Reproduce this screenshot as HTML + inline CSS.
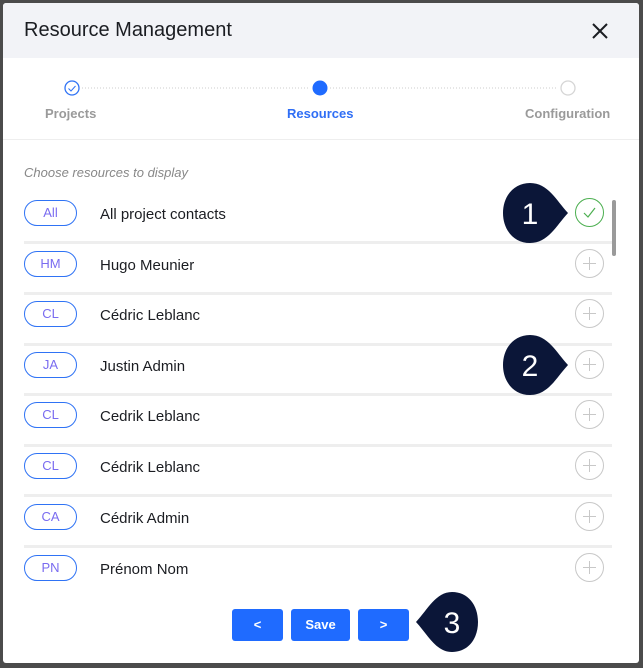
<!DOCTYPE html>
<html><head><style>
*{margin:0;padding:0;box-sizing:border-box}
body{width:643px;height:668px;background:#4b4b4b;position:relative;overflow:hidden;font-family:"Liberation Sans",sans-serif}
.modal{position:absolute;left:3px;top:3px;width:636px;height:660px;background:#fff;border-radius:3px;overflow:hidden}
.hdr{position:absolute;left:0;top:0;width:100%;height:55px;background:#f2f3f7}
.title{position:absolute;left:21px;top:16px;font-size:20px;color:#1b1d22}
.lbl{position:absolute;top:103px;font-size:13px;font-weight:bold;color:#9a9a9a}
.pill{position:absolute;left:21px;width:53px;height:26px;border:1.5px solid #2f73f5;border-radius:13px;color:#7a6cf0;font-size:13px;text-align:center;line-height:23px}
.name{position:absolute;left:97px;font-size:15px;color:#1b1d22;margin-top:2px}
.sep{position:absolute;left:21px;width:588px;height:3px;background:#eeeeee}
.plus{position:absolute;left:572px;width:29px;height:29px;border:1px solid #c8c8c8;border-radius:50%}
.btn{position:absolute;top:606px;height:32px;background:#1f6bff;border-radius:3px;color:#fff;font-size:13px;font-weight:bold;text-align:center;line-height:32px}
</style></head><body>
<div class="modal">
<div class="hdr"></div>
<div class="title">Resource Management</div>
<svg style="position:absolute;left:588px;top:19px" width="18" height="18"><path d="M2 2L16 16M16 2L2 16" stroke="#1b1d22" stroke-width="2"/></svg>
<svg style="position:absolute;left:0;top:70px" width="636" height="30">
<line x1="79" y1="15" x2="307" y2="15" stroke="#ccc" stroke-dasharray="1 2"/>
<line x1="327" y1="15" x2="555" y2="15" stroke="#ccc" stroke-dasharray="1 2"/>
<circle cx="69" cy="15" r="7" fill="none" stroke="#2f73f5" stroke-width="1.3"/>
<path d="M65.5 15.5l2.5 2.5 4.5-5" fill="none" stroke="#2f73f5" stroke-width="1"/>
<circle cx="317" cy="15" r="7.5" fill="#1f6bff"/>
<circle cx="565" cy="15" r="7" fill="none" stroke="#d5d5d5" stroke-width="1.3"/>
</svg>
<div class="lbl" style="left:42px">Projects</div>
<div class="lbl" style="left:284px;color:#2f6ef5">Resources</div>
<div class="lbl" style="left:522px">Configuration</div>
<div style="position:absolute;left:0;top:136px;width:100%;height:1px;background:#eee"></div>
<div style="position:absolute;left:21px;top:162px;font-size:13px;font-style:italic;color:#888">Choose resources to display</div>
<div style="position:absolute;left:609px;top:197px;width:4px;height:56px;background:#9a9a9a;border-radius:2px"></div>

<div class="pill" style="top:197px">All</div><div class="name" style="top:201px">All project contacts</div>
<div style="position:absolute;left:572px;top:195px;width:29px;height:29px;border:1px solid #4caf50;border-radius:50%"></div>
<svg style="position:absolute;left:572px;top:195px" width="29" height="29"><path d="M9 15l4 4 7-9" fill="none" stroke="#4caf50" stroke-width="1.2"/></svg>
<div class="sep" style="top:238px"></div>

<div class="pill" style="top:248px">HM</div><div class="name" style="top:252px">Hugo Meunier</div><div class="plus" style="top:246px"></div><div class="sep" style="top:289px"></div>
<div class="pill" style="top:298px">CL</div><div class="name" style="top:302px">Cédric Leblanc</div><div class="plus" style="top:296px"></div><div class="sep" style="top:340px"></div>
<div class="pill" style="top:349px">JA</div><div class="name" style="top:353px">Justin Admin</div><div class="plus" style="top:347px"></div><div class="sep" style="top:390px"></div>
<div class="pill" style="top:399px">CL</div><div class="name" style="top:403px">Cedrik Leblanc</div><div class="plus" style="top:397px"></div><div class="sep" style="top:441px"></div>
<div class="pill" style="top:450px">CL</div><div class="name" style="top:454px">Cédrik Leblanc</div><div class="plus" style="top:448px"></div><div class="sep" style="top:491px"></div>
<div class="pill" style="top:501px">CA</div><div class="name" style="top:505px">Cédrik Admin</div><div class="plus" style="top:499px"></div><div class="sep" style="top:542px"></div>
<div class="pill" style="top:552px">PN</div><div class="name" style="top:556px">Prénom Nom</div><div class="plus" style="top:550px"></div>
<svg style="position:absolute;left:572px;top:246px" width="29" height="340">
<g stroke="#c8c8c8" stroke-width="1">
<path d="M14.5 8v13M8 14.5h13"/><path d="M14.5 58v13M8 64.5h13"/><path d="M14.5 109v13M8 115.5h13"/>
<path d="M14.5 159v13M8 165.5h13"/><path d="M14.5 210v13M8 216.5h13"/><path d="M14.5 261v13M8 267.5h13"/><path d="M14.5 312v13M8 318.5h13"/>
</g></svg>

<div class="btn" style="left:229px;width:51px">&lt;</div>
<div class="btn" style="left:288px;width:59px">Save</div>
<div class="btn" style="left:355px;width:51px">&gt;</div>
</div>
<svg style="position:absolute;left:0;top:0" width="643" height="668">
<g fill="#0b1638">
<path d="M530 183 C548 183 556 200 568 213 C556 226 548 243 530 243 C514 243 503 230 503 213 C503 196 514 183 530 183Z"/>
<path d="M530 335 C548 335 556 352 568 365 C556 378 548 395 530 395 C514 395 503 382 503 365 C503 348 514 335 530 335Z"/>
<path d="M452 592 C436 592 428 609 416 622 C428 635 436 652 452 652 C468 652 478 639 478 622 C478 605 468 592 452 592Z"/>
</g>
<g fill="#fff" font-family="Liberation Sans,sans-serif" font-size="30" text-anchor="middle">
<text x="530" y="224">1</text><text x="530" y="376">2</text><text x="452" y="633">3</text>
</g>
</svg>
</body></html>
